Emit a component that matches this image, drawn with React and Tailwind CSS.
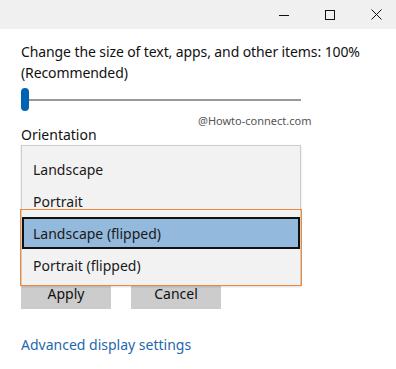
import React from "react";

const font = { fontFamily: '"Noto Sans", "Open Sans", sans-serif' };

function TitleBar() {
  return (
    <div className="flex h-[29px] items-center justify-end bg-[#f0f0f0]">
      <svg width="10" height="10" viewBox="0 0 10 10" className="mr-[36px]" aria-hidden="true">
        <path d="M0 5.5h10" stroke="#111" strokeWidth="1" />
      </svg>
      <svg width="10" height="10" viewBox="0 0 10 10" className="mr-[36px]" aria-hidden="true">
        <rect x="0.5" y="0.5" width="9" height="9" fill="none" stroke="#111" strokeWidth="1" />
      </svg>
      <svg width="11" height="11" viewBox="0 0 11 11" className="mr-[14px]" aria-hidden="true">
        <path d="M0.5 0.5l10 10M10.5 0.5l-10 10" stroke="#111" strokeWidth="1" />
      </svg>
    </div>
  );
}

function Slider() {
  return (
    <div className="mt-[5px] flex h-[23px] w-[280px] items-center">
      <div className="h-[23px] w-[8px] rounded-full bg-[#0063b1]" />
      <div className="h-[2px] flex-1 bg-[#999999]" />
    </div>
  );
}

const items = ["Landscape", "Portrait", "Landscape (flipped)", "Portrait (flipped)"];

function OrientationMenu() {
  return (
    <div className="absolute left-0 top-[20px] z-10 h-[141px] w-[280px] border border-[#cccccc] bg-[#f2f2f2] pt-[7px] shadow-[0_1px_2px_rgba(0,0,0,0.15)]">
      {items.map((label, i) =>
        i === 2 ? (
          <div
            key={label}
            className="flex h-[32px] items-center border-2 border-[#111] bg-[#93b9dc] pl-[9px] text-[#1a1a1a]"
          >
            {label}
          </div>
        ) : (
          <div key={label} className="flex h-[32px] items-center pl-[11px] text-[#1a1a1a]">
            {label}
          </div>
        )
      )}
      {/* annotation box */}
      <div className="pointer-events-none absolute left-[-2px] top-[63px] h-[77px] w-[282px] border border-[#f0883a]" />
    </div>
  );
}

export default function App() {
  return (
    <div className="relative h-[369px] w-[396px] overflow-hidden bg-white text-[14px] text-[#111]" style={font}>
      <TitleBar />
      <div className="px-[21px] pt-[12px]">
        <p className="whitespace-nowrap leading-[21px] tracking-[-0.1px]">
          Change the size of text, apps, and other items: 100%
          <br />
          (Recommended)
        </p>
        <Slider />
        <div className="relative mt-[14px]">
          <span className="absolute left-[177px] top-[-11px] text-[11px] leading-[14px] text-[#555555]">
            @Howto-connect.com
          </span>
          <p className="leading-[20px]">Orientation</p>
          <OrientationMenu />
          <div className="mt-[132px] flex gap-[20px]">
            <button className="h-[32px] w-[90px] bg-[#cccccc] text-[#111]">Apply</button>
            <button className="h-[32px] w-[90px] bg-[#cccccc] text-[#111]">Cancel</button>
          </div>
        </div>
        <a className="mt-[26px] block leading-[20px] text-[#1f68ab]">Advanced display settings</a>
      </div>
    </div>
  );
}
